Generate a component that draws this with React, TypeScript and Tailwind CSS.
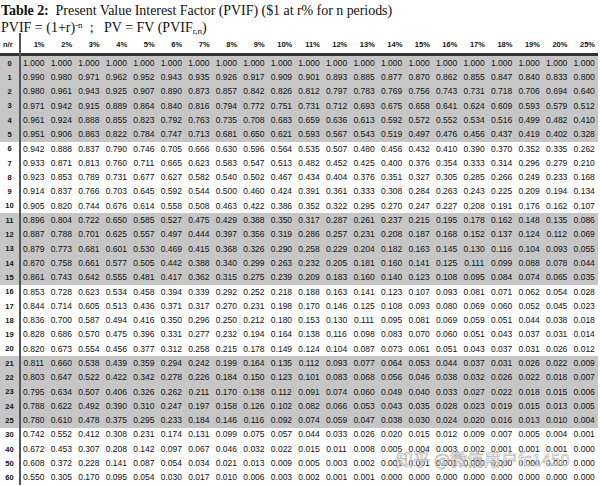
import React from 'react';

const rates = [1, 2, 3, 4, 5, 6, 7, 8, 9, 10, 11, 12, 13, 14, 15, 16, 17, 18, 19, 20, 25];
const periods = [0, 1, 2, 3, 4, 5, 6, 7, 8, 9, 10, 11, 12, 13, 14, 15, 16, 17, 18, 19, 20, 21, 22, 23, 24, 25, 30, 40, 50, 60];

const shaded = (n: number) => n <= 5 || (n >= 11 && n <= 15) || (n >= 21 && n <= 25);

const pvif = (r: number, n: number) => Math.pow(1 + r / 100, -n).toFixed(3);

const App = () => {
  return (
    <div className="relative w-[600px] h-[486px] bg-white overflow-hidden text-[#111]">
      <div className="pl-[1px] pt-[3px] font-['Liberation_Serif',serif] text-[14px] leading-[15px]">
        <div className="tracking-[-0.05px]">
          <span className="font-bold">Table 2:</span>&nbsp; Present Value Interest Factor (PVIF) ($1 at r% for n periods)
        </div>
        <div className="mt-[2px] h-[15px]">
          PVIF = (1+r)<sup className="text-[9px]">-n</sup>&nbsp;&nbsp;;&nbsp;&nbsp; PV = FV (PVIF<sub className="text-[9px]">r,n</sub>)
        </div>
      </div>

      <div className="relative mt-[1px] font-['Liberation_Sans',Arial,sans-serif]">
        {/* vertical rule next to the n column */}
        <div className="absolute left-[19px] top-[-3px] bottom-0 w-[2px] bg-[#555]" />

        <div className="grid grid-cols-[20px_repeat(21,1fr)] h-[17px] items-center text-[7.5px] font-bold pr-[2px]">
          <div className="pl-[3px]">n/r</div>
          {rates.map((r) => (
            <div key={r} className="text-right pr-[3px]">{r}%</div>
          ))}
        </div>
        <div className="h-[3px] bg-[#333] mr-[2px]" />

        <div className="pr-[2px]">
          {periods.map((n) => (
            <div
              key={n}
              className={`grid grid-cols-[20px_repeat(21,1fr)] h-[14.3px] items-center text-[8.5px] ${shaded(n) ? 'bg-[#c6c6c6]' : 'bg-white'}`}
            >
              <div className="text-center font-bold text-[7.5px] pr-[1px]">{n}</div>
              {rates.map((r) => (
                <div key={r} className="text-center">{pvif(r, n)}</div>
              ))}
            </div>
          ))}
        </div>
      </div>

      {/* watermark over the table */}
      <div className="absolute left-[396px] top-[450px] whitespace-nowrap text-[17px] leading-none text-white/75 font-['Noto_Sans_CJK_SC',sans-serif] [-webkit-text-stroke:0.5px_#9a9a9a]">
        知乎 @微信用户fc1450
      </div>
    </div>
  );
};

export default App;
